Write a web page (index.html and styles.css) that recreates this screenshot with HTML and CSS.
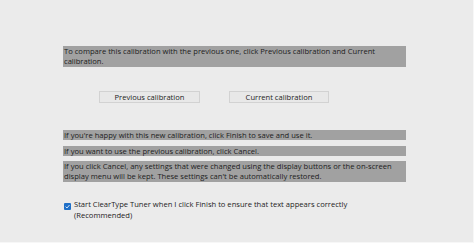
FILE: index.html
```html
<!DOCTYPE html>
<html>
<head>
<meta charset="utf-8">
<link rel="stylesheet" href="styles.css">
</head>
<body>
<div class="page">
  <div class="content">
    <p class="note two">To compare this calibration with the previous one, click Previous calibration and Current calibration.</p>
    <div class="buttons">
      <button class="btn prev">Previous calibration</button>
      <button class="btn cur">Current calibration</button>
    </div>
    <p class="note one first">If you're happy with this new calibration, click Finish to save and use it.</p>
    <p class="note one">If you want to use the previous calibration, click Cancel.</p>
    <p class="note two">If you click Cancel, any settings that were changed using the display buttons or the on-screen display menu will be kept. These settings can't be automatically restored.</p>
    <label class="check">
      <span class="box"><svg viewBox="0 0 7 7" width="7" height="7"><path d="M1.6 3.6 L3 5 L5.5 2" fill="none" stroke="#ffffff" stroke-width="0.8"/></svg></span>
      <span class="label">Start ClearType Tuner when I click Finish to ensure that text appears correctly (Recommended)</span>
    </label>
  </div>
</div>
</body>
</html>
```
FILE: styles.css
```css
html, body {
  margin: 0;
  padding: 0;
}
body {
  background: #ebebeb;
  font-family: "Open Sans", "Liberation Sans", sans-serif;
  font-size: 7.6px;
  color: #1c1c1c;
  width: 474px;
  height: 243px;
  overflow: hidden;
}
.page {
  box-sizing: border-box;
  width: 474px;
  height: 243px;
  border-right: 1px solid #f7f7f7;
  border-bottom: 1px solid #f7f7f7;
  padding-top: 46px;
  padding-left: 63px;
}
.content {
  width: 343px;
  display: flex;
  flex-direction: column;
}
.note {
  margin: 0;
  background: #a1a1a1;
  padding: 0 1px;
  line-height: 10.3px;
}
.note.one {
  height: 10px;
  margin-bottom: 5.5px;
}
.note.two {
  min-height: 21px;
}
.note.first {
  margin-top: 0;
}
.buttons {
  display: flex;
  padding-left: 36px;
  gap: 29px;
  margin-top: 24px;
  margin-bottom: 27px;
}
.btn {
  box-sizing: border-box;
  height: 12px;
  padding: 0;
  margin: 0;
  border: 1px solid #d2d2d2;
  background: #e8e8e8;
  font-family: inherit;
  font-size: 7.6px;
  color: #1c1c1c;
  line-height: 10px;
}
.btn.prev { width: 101px; }
.btn.cur { width: 100px; }
.check {
  display: flex;
  align-items: flex-start;
  margin-top: 17px;
  gap: 3px;
}
.box {
  flex: none;
  width: 7px;
  height: 7px;
  margin-top: 4px;
  margin-left: 1px;
  background: #1f6fc7;
  border-radius: 1px;
  display: flex;
}
.label {
  line-height: 10.5px;
  width: 300px;
}
```
